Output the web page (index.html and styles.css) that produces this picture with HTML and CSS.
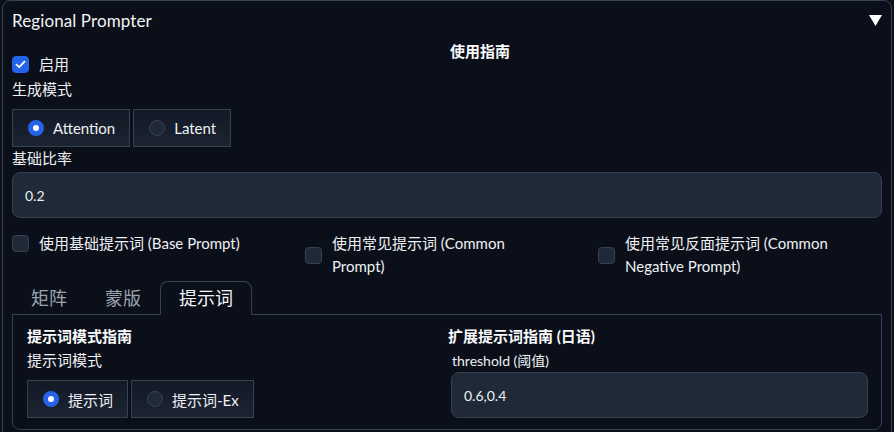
FILE: index.html
```html
<!DOCTYPE html>
<html lang="zh-CN">
<head>
    <meta charset="UTF-8">
    <meta name="viewport" content="width=device-width, initial-scale=1.0">
    <title>Regional Prompter</title>
    <link rel="stylesheet" href="styles.css">
</head>
<body>
    <div class="panel">
        <div class="panel-head">
            <span class="panel-title">Regional Prompter</span>
            <svg class="caret" width="13" height="11" viewBox="0 0 13 11"><polygon points="0,0 13,0 6.5,11" fill="#ffffff"/></svg>
        </div>

        <div class="top-row">
            <div class="top-left">
                <label class="check">
                    <span class="box checked">
                        <svg width="11" height="9" viewBox="0 0 11 9"><path d="M1.5 4.6 L4.2 7.2 L9.5 1.6" fill="none" stroke="#fff" stroke-width="1.8" stroke-linecap="round" stroke-linejoin="round"/></svg>
                    </span>
                    <span class="check-text">启用</span>
                </label>
            </div>
            <div class="guide">使用指南</div>
        </div>

        <div class="label">生成模式</div>
        <div class="radios">
            <div class="radio-opt"><span class="dot on"></span>Attention</div>
            <div class="radio-opt"><span class="dot"></span>Latent</div>
        </div>

        <div class="label label-tight">基础比率</div>
        <div class="input">0.2</div>

        <div class="check-row">
            <label class="check">
                <span class="box"></span>
                <span class="check-text wrap">使用基础提示词 (Base Prompt)</span>
            </label>
            <label class="check">
                <span class="box"></span>
                <span class="check-text wrap">使用常见提示词 (Common Prompt)</span>
            </label>
            <label class="check">
                <span class="box"></span>
                <span class="check-text wrap">使用常见反面提示词 (Common Negative Prompt)</span>
            </label>
        </div>

        <div class="tabs">
            <div class="tab">矩阵</div>
            <div class="tab">蒙版</div>
            <div class="tab selected">提示词</div>
        </div>
        <div class="tab-panel">
            <div class="tab-col">
                <div class="heading">提示词模式指南</div>
                <div class="label label-sub">提示词模式</div>
                <div class="radios">
                    <div class="radio-opt"><span class="dot on"></span>提示词</div>
                    <div class="radio-opt"><span class="dot"></span>提示词-Ex</div>
                </div>
            </div>
            <div class="tab-col">
                <div class="heading">扩展提示词指南 (日语)</div>
                <div class="field">
                    <div class="small-label">threshold (阈值)</div>
                    <div class="input input-small">0.6,0.4</div>
                </div>
            </div>
        </div>
    </div>
</body>
</html>
```

FILE: styles.css
```css
html, body {
    margin: 0;
    height: 432px;
    overflow: hidden;
    background-color: #0b0f19;
}

body {
    font-family: "Lato", "Noto Sans CJK SC", sans-serif;
    color: #eef0f3;
    font-size: 15px;
}

.panel {
    margin-left: 2px;
    width: 870px;
    height: 520px;
    padding: 7px 9px 10px 9px;
    border: 1px solid #374151;
    border-radius: 8px;
}

.panel-head {
    display: flex;
    justify-content: space-between;
    align-items: center;
    height: 24px;
}

.panel-title {
    font-size: 17px;
    letter-spacing: 0.1px;
    color: #f3f4f6;
}

.top-row {
    display: flex;
    margin-top: 9px;
}

.top-left {
    width: 66px;
    padding-top: 15px;
}

.guide {
    flex: 1;
    text-align: center;
    font-weight: 700;
    line-height: 20px;
    color: #f9fafb;
}

.check {
    display: flex;
    align-items: center;
    gap: 10px;
}

.box {
    flex: none;
    width: 15px;
    height: 15px;
    border: 1px solid #374151;
    border-radius: 4px;
    background-color: #1f2937;
    display: flex;
    align-items: center;
    justify-content: center;
}

.box.checked {
    background-color: #2563eb;
    border-color: #2563eb;
}

.check-text {
    line-height: 17px;
}

.check-text.wrap {
    line-height: 23px;
    max-width: 218px;
}

.label {
    margin-top: 6px;
    line-height: 20px;
}

.label-tight {
    margin-top: 1px;
}

.label-sub {
    margin-top: 4px;
}

.radios {
    display: flex;
    gap: 3px;
    margin-top: 10px;
}

.radio-opt {
    display: flex;
    align-items: center;
    gap: 9px;
    height: 36px;
    padding: 0 14px 0 15px;
    border: 1px solid #374151;
    background: linear-gradient(to bottom, #131926, #1c2331);
}

.dot {
    width: 16px;
    height: 16px;
    box-sizing: border-box;
    border: 1px solid #374151;
    border-radius: 50%;
    background-color: #1f2937;
}

.dot.on {
    border: 5px solid #2563eb;
    background-color: #ffffff;
}

.input {
    margin-top: 4px;
    height: 44px;
    padding: 0 12px;
    display: flex;
    align-items: center;
    border: 1px solid #374151;
    border-radius: 8px;
    background-color: #1f2937;
    font-size: 14px;
}

.check-row {
    display: grid;
    grid-template-columns: repeat(3, 281px);
    align-items: start;
    gap: 12px;
    margin-top: 14px;
}

.tabs {
    display: flex;
    margin-top: 3px;
}

.tab {
    padding: 4px 18px;
    line-height: 24px;
    font-size: 18px;
    color: #9ca3af;
    border: 1px solid transparent;
    border-bottom: none;
}

.tab.selected {
    color: #f3f4f6;
    border-color: #374151;
    border-radius: 8px 8px 0 0;
    background-color: #0b0f19;
    margin-bottom: -1px;
    position: relative;
    z-index: 1;
    height: 25px;
}

.tab-panel {
    display: grid;
    grid-template-columns: 409px 1fr;
    gap: 12px;
    padding: 11px 13px 11px 14px;
    border: 1px solid #374151;
    border-radius: 0 0 8px 8px;
}

.heading {
    font-weight: 700;
    line-height: 20px;
    color: #f9fafb;
}

.field {
    padding-left: 3px;
}

.small-label {
    margin-top: 5px;
    margin-left: 1px;
    font-size: 14px;
    line-height: 20px;
}

.input-small {
    margin-top: 1px;
}
```
